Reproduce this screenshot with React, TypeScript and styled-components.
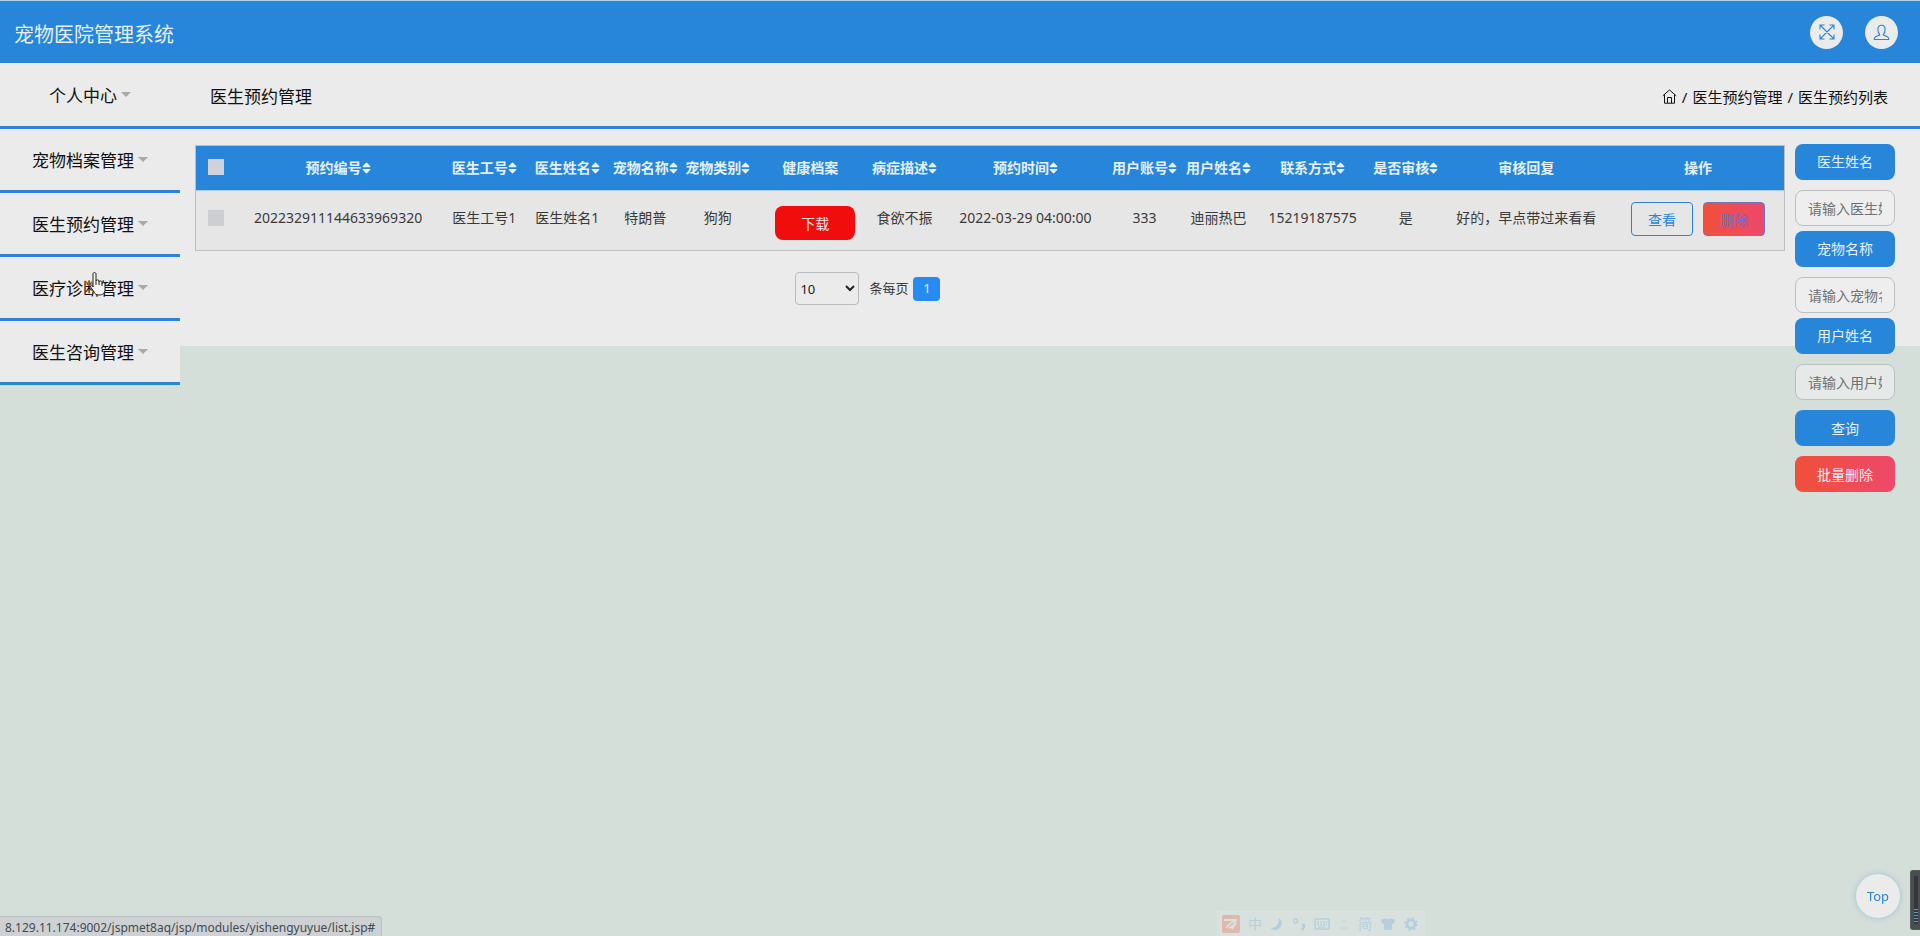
import React from "react";
import styled, { createGlobalStyle } from "styled-components";
import { FaSort } from "react-icons/fa";

const blue = "#2786d9";
const panel = "#ebebeb";

const GlobalStyle = createGlobalStyle`
  *, *::before, *::after { box-sizing: border-box; }
  body {
    margin: 0;
    background: #d5dfda;
    color: #3a3a3a;
    font: 14px/21px "Noto Sans", "Noto Sans CJK SC", sans-serif;
  }
  button, input, select { font: inherit; margin: 0; }
  a { color: inherit; text-decoration: none; }
`;

const Page = styled.div`
  min-height: 100vh;
`;

const Header = styled.header`
  display: flex;
  align-items: center;
  justify-content: space-between;
  height: 63px;
  padding: 6px 22px 0 14px;
  border-top: 1px solid #a9d4ee;
  background: ${blue};
`;

const Brand = styled.h1`
  margin: 0;
  color: #e4f0f8;
  font-size: 20px;
  line-height: 28px;
  font-weight: 400;
`;

const HeaderActions = styled.div`
  display: flex;
  gap: 22px;
  padding-bottom: 6px;
`;

const RoundButton = styled.button`
  display: grid;
  place-items: center;
  width: 33px;
  height: 33px;
  padding: 0;
  border: 0;
  border-radius: 50%;
  background: #ebebeb;
  color: ${blue};
`;

const Body = styled.div`
  display: grid;
  grid-template-columns: 180px minmax(0, 1fr);
  align-items: start;
`;

const SideNav = styled.nav`
  background: ${panel};
`;

const SideItem = styled.a`
  display: flex;
  align-items: center;
  justify-content: center;
  gap: 4px;
  height: 64px;
  padding-top: 2px;
  border-bottom: 3px solid ${blue};
  color: #111;
  font-size: 17px;
  line-height: 24px;

  &:first-child { height: 66px; }

  &::after {
    content: "";
    margin-bottom: 2px;
    border: 5px solid transparent;
    border-top-color: #a9a9a9;
    border-bottom: 0;
  }
`;

const TitleBar = styled.div`
  display: flex;
  align-items: center;
  justify-content: space-between;
  height: 66px;
  padding: 4px 32px 0 30px;
  border-bottom: 3px solid ${blue};
  background: ${panel};
  color: #111;
`;

const Title = styled.h2`
  margin: 0;
  font-size: 17px;
  line-height: 24px;
  font-weight: 400;
`;

const Crumbs = styled.nav`
  display: flex;
  align-items: center;
  gap: 5px;
  font-size: 15px;
  line-height: 24px;

  svg { display: block; }
`;

const Content = styled.main`
  display: flex;
  align-items: flex-start;
  gap: 10px;
  padding: 15px 25px 41px 15px;
  background: ${panel};
`;

const ListArea = styled.section`
  flex: 1;
  min-width: 0;
  padding-top: 1px;
`;

const Table = styled.table`
  width: 100%;
  table-layout: fixed;
  border-collapse: separate;
  border-spacing: 0;
  border: 1px solid #bdbfc1;
  background: #e6e6e6;
  text-align: center;
  white-space: nowrap;
`;

const HeadCell = styled.th`
  height: 45px;
  padding: 0 0 2px;
  border-bottom: 1px solid #a9cdec;
  background: ${blue};
  color: #e4f0f8;
  font-weight: 700;
  vertical-align: middle;
`;

const SortIcon = styled(FaSort)`
  width: 9px;
  height: 14px;
  vertical-align: -2px;
`;

const Cell = styled.td<{ $top?: number }>`
  height: 59px;
  padding: ${(p) => p.$top ?? 16}px 0 0;
  vertical-align: top;
`;

const Check = styled.input<{ $shade: string }>`
  display: block;
  appearance: none;
  width: 16px;
  height: 16px;
  margin: 0 0 0 12px;
  background: ${(p) => p.$shade};
`;

const DownloadButton = styled.button`
  width: 80px;
  height: 34px;
  margin-left: 10px;
  padding: 0;
  border: 0;
  border-radius: 8px;
  background: #f20d0d;
  color: #f5e6e6;
`;

const RowActions = styled.div`
  display: flex;
  justify-content: center;
  gap: 10px;
`;

const RowButton = styled.button<{ $danger?: boolean }>`
  width: 62px;
  height: 34px;
  padding: 0;
  border: 1px solid ${(p) => (p.$danger ? "#6a78c4" : blue)};
  border-radius: 4px;
  background: ${(p) => (p.$danger ? "linear-gradient(90deg, #f0503a, #ee486c)" : "transparent")};
  color: ${(p) => (p.$danger ? "#7a68c4" : blue)};
`;

const Pager = styled.div`
  display: grid;
  grid-template-columns: 600fr auto auto auto 844fr;
  align-items: center;
  margin-top: 21px;
  font-size: 13px;
`;

const PageSize = styled.select`
  grid-column: 2;
  width: 64px;
  height: 33px;
  border: 1px solid #b9bcbf;
  border-radius: 4px;
  background: transparent;
  color: #222;
`;

const PagerLabel = styled.label`
  margin: 0 5px 0 10px;
`;

const PageButton = styled.button`
  width: 27px;
  height: 24px;
  padding: 0;
  border: 0;
  border-radius: 4px;
  background: #268cf0;
  color: #e4f0f8;
`;

/* The filter column hangs below the panel without stretching it. */
const Filters = styled.form`
  display: flex;
  flex-direction: column;
  gap: 10px;
  width: 100px;
  height: 0;
`;

const FilterGroup = styled.div`
  display: flex;
  flex: none;
  flex-direction: column;
  gap: 10px;

  & + & { margin-top: -5px; }
`;

const FilterLabel = styled.label`
  height: 36px;
  border-radius: 8px;
  background: ${blue};
  color: #e4f0f8;
  line-height: 36px;
  text-align: center;
`;

const FilterInput = styled.input`
  width: 100%;
  height: 36px;
  padding: 0 12px;
  border: 1px solid #bcbfc2;
  border-radius: 8px;
  background: rgba(240, 240, 240, 0.6);
  color: #444;
  outline: none;

  &::placeholder { color: #6c7277; opacity: 1; }
`;

const FilterButton = styled.button<{ $danger?: boolean }>`
  flex: none;
  height: 36px;
  padding: 0;
  border: 0;
  border-radius: 8px;
  background: ${(p) => (p.$danger ? "linear-gradient(90deg, #f0503a, #ee486c)" : blue)};
  color: #e9eff5;
`;

const TopButton = styled.button`
  position: fixed;
  right: 20px;
  bottom: 18px;
  width: 44px;
  height: 44px;
  padding: 0;
  border: 0;
  border-radius: 50%;
  background: #ebebeb;
  box-shadow: 0 0 6px rgba(80, 160, 200, 0.45);
  color: ${blue};
  font-size: 13px;
`;

const StatusBar = styled.div`
  position: fixed;
  left: 0;
  bottom: 0;
  height: 20px;
  padding: 0 6px 0 5px;
  border: 1px solid #bcc0c2;
  border-width: 1px 1px 0 0;
  border-top-right-radius: 4px;
  background: #cdd1d4;
  color: #454a4e;
  font-size: 12px;
  line-height: 21px;
`;

const InputBar = styled.div`
  position: fixed;
  right: 495px;
  bottom: 0;
  display: flex;
  align-items: center;
  gap: 8px;
  height: 25px;
  padding: 0 6px 0 4px;
  border: 1px solid #dbe2de;
  border-bottom: 0;
  background: #d8e1dd;
  color: #b5cfde;
  font-size: 14px;
  line-height: 22px;

  svg { display: block; }
`;

const Meter = styled.div`
  position: fixed;
  right: 0;
  bottom: 6px;
  width: 10px;
  height: 60px;
  padding: 5px 3px;
  border: 1px solid #55595c;
  border-right: 0;
  border-radius: 3px 0 0 3px;
  background: #4a4e52;
`;

const MeterTrack = styled.div`
  width: 4px;
  height: 48px;
  background: linear-gradient(#33373b 0 32px, transparent 32px),
    repeating-linear-gradient(#5aa0b4 0 1px, #33373b 1px 3px);
`;

const Pointer = styled.svg`
  position: absolute;
  left: 90px;
  top: 272px;
  pointer-events: none;
`;

const columns: { name: string; width: number; sort?: boolean }[] = [
  { name: "预约编号", width: 214, sort: true },
  { name: "医生工号", width: 78, sort: true },
  { name: "医生姓名", width: 88, sort: true },
  { name: "宠物名称", width: 68, sort: true },
  { name: "宠物类别", width: 77, sort: true },
  { name: "健康档案", width: 108 },
  { name: "病症描述", width: 80, sort: true },
  { name: "预约时间", width: 162, sort: true },
  { name: "用户账号", width: 76, sort: true },
  { name: "用户姓名", width: 72, sort: true },
  { name: "联系方式", width: 116, sort: true },
  { name: "是否审核", width: 70, sort: true },
  { name: "审核回复", width: 171 },
  { name: "操作", width: 172 },
];

const filters = [
  { id: "doctor", label: "医生姓名", hint: "请输入医生姓名" },
  { id: "pet", label: "宠物名称", hint: "请输入宠物名称" },
  { id: "user", label: "用户姓名", hint: "请输入用户姓名" },
];

const menu = ["个人中心", "宠物档案管理", "医生预约管理", "医疗诊断管理", "医生咨询管理"];

function ExpandIcon() {
  return (
    <svg width="16" height="16" viewBox="0 0 16 16" fill="none" stroke="currentColor" strokeWidth="1.1">
      <path d="M1.5 1.5l13 13M14.5 1.5l-13 13M1 5.5V1h4.5M10.5 1H15v4.5M15 10.5V15h-4.5M5.5 15H1v-4.5" />
    </svg>
  );
}

function UserIcon() {
  return (
    <svg width="17" height="17" viewBox="0 0 18 18" fill="none" stroke="currentColor" strokeWidth="1.2">
      <path d="M7 10.8C5.7 9.8 5.2 8 5.2 5.600 5.200 3 6.700 1.300 9 1.300s3.800 1.700 3.800 4.300c0 2.400-.5 4.200-1.800 5.200v1l4.300 1.700c1 .4 1.400 1.200 1.400 2.900H1.300c0-1.700.4-2.500 1.400-2.900L7 11.800z" />
    </svg>
  );
}

function HomeIcon() {
  return (
    <svg width="15" height="15" viewBox="0 0 15 15" fill="none" stroke="currentColor" strokeWidth="1">
      <path d="M.8 6.800L7.500 1l6.700 5.800M2.500 5.500v8.700h10V5.500M5.500 14V8.500h4V14" />
    </svg>
  );
}

function InputMethodBar() {
  return (
    <InputBar>
      <svg width="18" height="18" viewBox="0 0 18 18">
        <rect width="18" height="18" rx="2" fill="#e0b8ac" />
        <path d="M2 5h13c-4 1-8 4-11 8M7 13c3-1 5-3 7-6-1 3-2 5-4 7" fill="none" stroke="#dbe2de" strokeWidth="1.800" />
      </svg>
      <span>中</span>
      <svg width="14" height="14" viewBox="0 0 14 14" fill="currentColor">
        <path d="M9 1c5 4 3 11-3 12-3 0-5-1-5-2 5 0 8-4 8-10z" />
      </svg>
      <svg width="14" height="14" viewBox="0 0 14 14" fill="none" stroke="currentColor" strokeWidth="1.500">
        <circle cx="3.500" cy="4" r="2" />
        <path d="M10 8h2v2l-2 3" strokeWidth="2.500" />
      </svg>
      <svg width="16" height="14" viewBox="0 0 16 14" fill="none" stroke="currentColor" strokeWidth="1.500">
        <rect x="1" y="2" width="14" height="10" rx="1" />
        <path d="M3 5h10M3 7.500h10M4.500 10h7" strokeDasharray="2 1" />
      </svg>
      <svg width="12" height="14" viewBox="0 0 12 14" fill="#cfdcdb">
        <circle cx="6" cy="4" r="2" />
        <path d="M1 12c1-4 9-4 10 0z" />
      </svg>
      <span>简</span>
      <svg width="16" height="14" viewBox="0 0 16 14" fill="currentColor">
        <path d="M5 1c1 1.500 5 1.500 6 0l4 2-1.500 4-1.500-.5V13H4V6.500L2.500 7 1 3z" />
      </svg>
      <svg width="14" height="14" viewBox="0 0 14 14" fill="none" stroke="currentColor">
        <circle cx="7" cy="7" r="4" strokeWidth="2.500" />
        <circle cx="7" cy="7" r="6" strokeWidth="1.500" strokeDasharray="2.400 2.300" />
      </svg>
    </InputBar>
  );
}

export default function App() {
  return (
    <Page>
      <GlobalStyle />
      <Header>
        <Brand>宠物医院管理系统</Brand>
        <HeaderActions>
          <RoundButton type="button" aria-label="全屏"><ExpandIcon /></RoundButton>
          <RoundButton type="button" aria-label="用户"><UserIcon /></RoundButton>
        </HeaderActions>
      </Header>
      <Body>
        <SideNav>
          {menu.map((name) => (
            <SideItem href="#" key={name}>{name}</SideItem>
          ))}
        </SideNav>
        <div>
          <TitleBar>
            <Title>医生预约管理</Title>
            <Crumbs>
              <a href="#" aria-label="首页"><HomeIcon /></a>
              <span>/</span>
              <a href="#">医生预约管理</a>
              <span>/</span>
              <span>医生预约列表</span>
            </Crumbs>
          </TitleBar>
          <Content>
            <ListArea>
              <Table>
                <colgroup>
                  <col width={35} />
                  {columns.map((c) => <col key={c.name} width={c.width} />)}
                </colgroup>
                <thead>
                  <tr>
                    <HeadCell><Check type="checkbox" aria-label="全选" $shade="#cfd2d8" /></HeadCell>
                    {columns.map((c) => (
                      <HeadCell key={c.name}>{c.name}{c.sort && <SortIcon />}</HeadCell>
                    ))}
                  </tr>
                </thead>
                <tbody>
                  <tr>
                    <Cell $top={19}><Check type="checkbox" aria-label="选择" $shade="#cbcfd2" /></Cell>
                    <Cell>202232911144633969320</Cell>
                    <Cell>医生工号1</Cell>
                    <Cell>医生姓名1</Cell>
                    <Cell>特朗普</Cell>
                    <Cell>狗狗</Cell>
                    <Cell $top={15}><DownloadButton type="button">下载</DownloadButton></Cell>
                    <Cell>食欲不振</Cell>
                    <Cell>2022-03-29 04:00:00</Cell>
                    <Cell>333</Cell>
                    <Cell>迪丽热巴</Cell>
                    <Cell>15219187575</Cell>
                    <Cell>是</Cell>
                    <Cell>好的，早点带过来看看</Cell>
                    <Cell $top={11}>
                      <RowActions>
                        <RowButton type="button">查看</RowButton>
                        <RowButton type="button" $danger>删除</RowButton>
                      </RowActions>
                    </Cell>
                  </tr>
                </tbody>
              </Table>
              <Pager>
                <PageSize id="page-size" defaultValue="10">
                  <option>10</option>
                  <option>25</option>
                  <option>50</option>
                </PageSize>
                <PagerLabel htmlFor="page-size">条每页</PagerLabel>
                <PageButton type="button">1</PageButton>
              </Pager>
            </ListArea>
            <Filters>
              {filters.map((f) => (
                <FilterGroup key={f.id}>
                  <FilterLabel htmlFor={f.id}>{f.label}</FilterLabel>
                  <FilterInput id={f.id} placeholder={f.hint} />
                </FilterGroup>
              ))}
              <FilterButton type="button">查询</FilterButton>
              <FilterButton type="button" $danger>批量删除</FilterButton>
            </Filters>
          </Content>
        </div>
      </Body>
      <Pointer width="17" height="24" viewBox="0 0 17 24" fill="#f4f4f4" stroke="#222" strokeLinejoin="round">
        <path d="M3 15V2c0-2 3-2 3 0v7c0-1.500 3-1.500 3 0v1c0-1.500 3-1.500 3 .5v1c0-1.500 3-1 3 .5v5c0 4-2 6-6 6-3 0-4-1-5-3L1 15.500c-1-2 .5-3 2-1.500z" />
        <path d="M6 9v4M9 10v3M12 11v3" fill="none" />
      </Pointer>
      <TopButton type="button">Top</TopButton>
      <InputMethodBar />
      <Meter><MeterTrack /></Meter>
      <StatusBar>8.129.11.174:9002/jspmet8aq/jsp/modules/yishengyuyue/list.jsp#</StatusBar>
    </Page>
  );
}
